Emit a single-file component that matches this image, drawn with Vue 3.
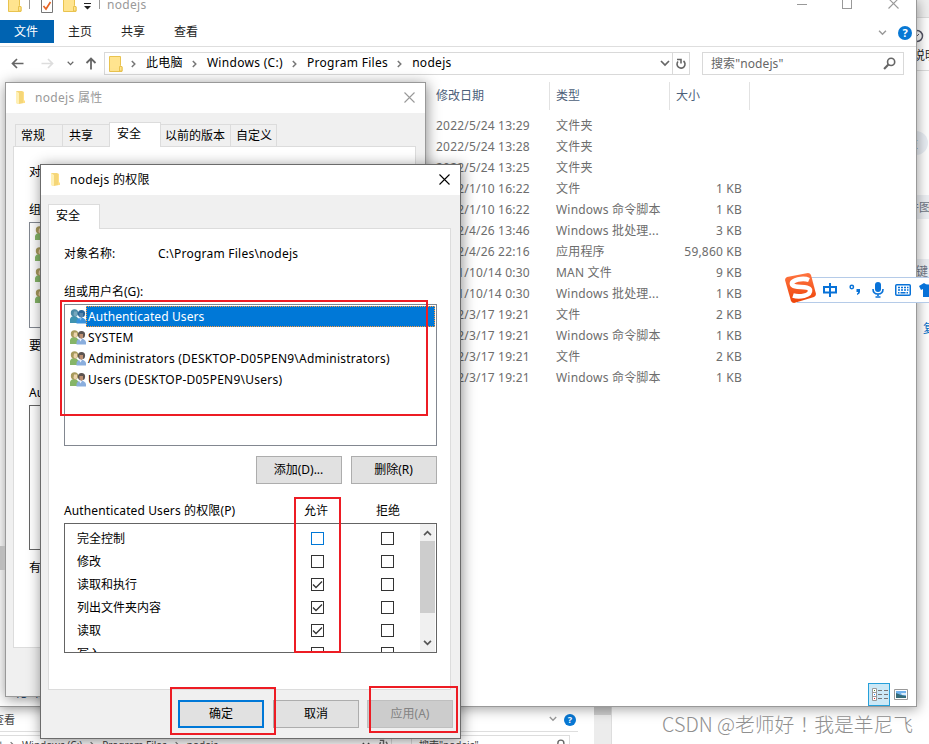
<template>
    <div class="desktop">
        <svg class="symbols" width="0" height="0">
            <symbol id="folder" viewBox="0 0 14 16">
                <path d="M.5 .5h11v9l1.500 1.500v4.500H.5z" fill="#ffe48f" stroke="#e9c34f" />
                <path d="M10.500 15v-4.500h2.500V15z" fill="#ffe48f" stroke="#e9c34f" />
            </symbol>
            <symbol id="folder-small" viewBox="0 0 12 13">
                <path d="M1 0h6l2 1v11l-5 1-3-1z" fill="#f5d678" />
                <path d="M1 0l3 2v11l-3-1z" fill="#fff0b5" />
                <path d="M8 1h1v8l1 1v2H8z" fill="#ffdf85" />
            </symbol>
            <symbol id="users" viewBox="0 0 16 15">
                <path d="M0 14V10Q1 7 4 7t4.500 3v4z" fill="#86b568" />
                <circle cx="4.500" cy="4" r="3.700" fill="#a79a5c" />
                <path d="M4 2.500h3v4L5 7.500 3.500 6z" fill="#ecd3ad" />
                <path d="M6.500 14.500V12q1-3.500 4.500-3.500t5 3.500v2.500z" fill="#8aaedd" />
                <path d="M9 9l1.500 2.500L12 9z" fill="#eef4ff" />
                <circle cx="11.500" cy="4.700" r="3.600" fill="#5c5450" />
                <path d="M9.500 4h3.500v3.500L11.500 9 9.500 7z" fill="#bd9072" />
            </symbol>
            <symbol id="users-selected" viewBox="0 0 16 15">
                <path d="M0 14V10Q1 7 4 7t4.500 3v4z" fill="#3f93b0" />
                <circle cx="4.500" cy="4" r="3.700" fill="#4b8aa6" />
                <path d="M4 2.500h3v4L5 7.500 3.500 6z" fill="#78a7bd" />
                <path d="M6.500 14.500V12q1-3.500 4.500-3.500t5 3.500v2.500z" fill="#3992dc" />
                <path d="M9 9l1.500 2.500L12 9z" fill="#83bdf0" />
                <circle cx="11.500" cy="4.700" r="3.600" fill="#2a6496" />
                <path d="M9.500 4h3.500v3.500L11.500 9 9.500 7z" fill="#5a86ab" />
            </symbol>
            <symbol id="cross" viewBox="0 0 11 11">
                <path d="M.5 .5l10 10M10.500 .5l-10 10" fill="none" stroke="currentColor" stroke-width="1.100" />
            </symbol>
            <symbol id="right" viewBox="0 0 5 8">
                <path d="M.8 1l3 3-3 3" fill="none" stroke="#777" stroke-width="1.500" />
            </symbol>
            <symbol id="down" viewBox="0 0 10 7">
                <path d="M1 1l4 4 4-4" fill="none" stroke="currentColor" stroke-width="1.700" />
            </symbol>
            <symbol id="search" viewBox="0 0 12 12">
                <circle cx="7.500" cy="4.500" r="3.300" fill="none" stroke="#666" stroke-width="1.500" />
                <path d="M5 7L1 11" stroke="#666" stroke-width="2" />
            </symbol>
            <symbol id="refresh" viewBox="0 0 12 12">
                <path d="M8.500 3a4 4 0 1 1-5.500 .5" fill="none" stroke="#666" stroke-width="1.600" />
                <path d="M2 1.500h4v4" fill="none" stroke="#666" stroke-width="1.600" />
            </symbol>
        </svg>

        <aside class="page-edge">
            <div class="edge-top"></div>
            <svg class="edge-clock" width="14" height="14" viewBox="0 0 14 14">
                <circle cx="7" cy="7" r="5.500" fill="none" stroke="#555666" stroke-width="1.500" />
                <path d="M7 7l2-2" stroke="#555666" />
            </svg>
            <div class="edge-label">说明</div>
            <div class="edge-pill">性</div>
            <div class="edge-tag">件图</div>
            <div class="edge-tag second">键</div>
            <div class="edge-link">复</div>
        </aside>

        <section class="back-window">
            <div class="back-main">
                <div class="back-ribbon">
                    <span>查看</span>
                    <svg class="back-down" width="8" height="6"><use href="#down" /></svg>
                    <span class="help small">?</span>
                </div>
                <div class="back-address">
                    <div class="back-path">
                        <span>脑</span><svg width="4" height="7"><use href="#right" /></svg>
                        <span>Windows (C:)</span><svg width="4" height="7"><use href="#right" /></svg>
                        <span>Program Files</span><svg width="4" height="7"><use href="#right" /></svg>
                        <span>nodejs</span>
                        <svg class="push" width="8" height="6"><use href="#down" /></svg>
                        <svg width="11" height="11"><use href="#refresh" /></svg>
                    </div>
                    <div class="back-search">搜索"nodejs"<svg width="11" height="11"><use href="#search" /></svg></div>
                </div>
            </div>
            <div class="back-scroll"><div></div></div>
        </section>

        <section class="explorer">
            <header class="caption">
                <svg class="cap-folder" width="14" height="16"><use href="#folder" /></svg>
                <i class="divider"></i>
                <svg class="cap-check" width="12" height="16" viewBox="0 0 12 16">
                    <path d="M.5 .5h11v15H.5z" fill="#fff" stroke="#777" />
                    <path d="M2.500 9l2.500 3 4.500-7" fill="none" stroke="#e66425" stroke-width="1.700" />
                </svg>
                <svg class="cap-folder two" width="14" height="16"><use href="#folder" /></svg>
                <svg class="cap-arrow" width="7" height="7" viewBox="0 0 7 7">
                    <path d="M0 0h7v1H0zM0 3h7L3.500 6.500z" fill="#222" />
                </svg>
                <i class="divider"></i>
                <span class="cap-title">nodejs</span>
                <i class="minimise"></i>
                <i class="maximise"></i>
                <svg class="cap-close" width="11" height="11"><use href="#cross" /></svg>
            </header>
            <nav class="ribbon">
                <b>文件</b><span>主页</span><span>共享</span><span>查看</span>
                <svg width="9" height="6"><use href="#down" /></svg>
                <span class="help">?</span>
            </nav>
            <div class="address-row">
                <svg class="nav-back" width="13" height="11" viewBox="0 0 13 11">
                    <path d="M12.500 5.500h-11M6 1L1.500 5.500 6 10" fill="none" stroke="#666" stroke-width="1.700" />
                </svg>
                <svg class="nav-next" width="13" height="11" viewBox="0 0 13 11">
                    <path d="M.5 5.500h11M7 1l4.500 4.500L7 10" fill="none" stroke="#ddd" stroke-width="1.700" />
                </svg>
                <svg class="nav-recent" width="7" height="5"><use href="#down" /></svg>
                <svg class="nav-up" width="12" height="13" viewBox="0 0 12 13">
                    <path d="M6 12.500v-11M1.500 6L6 1.500 10.500 6" fill="none" stroke="#666" stroke-width="1.800" />
                </svg>
                <div class="address">
                    <svg class="path-folder" width="14" height="16"><use href="#folder" /></svg>
                    <template v-for="part in path" :key="part">
                        <svg class="path-sep" width="5" height="8"><use href="#right" /></svg>
                        <span>{{ part }}</span>
                    </template>
                    <svg class="address-down" width="10" height="7"><use href="#down" /></svg>
                    <div class="refresh"><svg width="12" height="12"><use href="#refresh" /></svg></div>
                </div>
                <div class="search">搜索"nodejs"<svg width="13" height="13"><use href="#search" /></svg></div>
            </div>
            <div class="file-list">
                <div class="file-head"><span>修改日期</span><span>类型</span><span>大小</span></div>
                <div class="file" v-for="(file, index) in files" :key="index">
                    <span>{{ file[0] }}</span><span>{{ file[1] }}</span><span>{{ file[2] }}</span>
                </div>
            </div>
            <footer class="status">
                <span>15 个</span>
                <div class="view details">
                    <svg width="16" height="13" viewBox="0 0 16 13">
                        <path d="M.5 .5h4v12h-4zM.5 4.500h4M.5 8.500h4" fill="#fff" stroke="#999" />
                        <path d="M6 2.500h4m2 0h4M6 6.500h4m2 0h4M6 10.500h4m2 0h4" stroke="#777" />
                        <path d="M2 2h1v1H2z" fill="#5a8a32" /><path d="M2 6h1v1H2z" fill="#1e90ff" /><path d="M2 10h1v1H2z" fill="#e02020" />
                    </svg>
                </div>
                <svg class="view-picture" width="14" height="11" viewBox="0 0 14 11">
                    <path d="M.5 .5h13v10H.5z" fill="#fff" stroke="#999" />
                    <path d="M2 2h10v7H2z" fill="#72b3ee" /><path d="M2 4l5 2 5 1v2H2z" fill="#356b78" />
                    <path d="M7 4h5v2H8z" fill="#d8ecfa" />
                </svg>
            </footer>
        </section>

        <section class="dialog properties">
            <header>
                <svg width="12" height="13"><use href="#folder-small" /></svg>
                <span>nodejs 属性</span>
                <svg class="close" width="11" height="11"><use href="#cross" /></svg>
            </header>
            <div class="tabs">
                <span>常规</span><span>共享</span><span class="active">安全</span><span class="wide">以前的版本</span><span>自定义</span>
            </div>
            <div class="pane">
                <p class="object">对</p>
                <p class="group">组</p>
                <div class="mini-list">
                    <svg v-for="n in 4" :key="n" width="16" height="15"><use href="#users" /></svg>
                </div>
                <p class="edit">要</p>
                <p class="auth">Au</p>
                <div class="mini-perms"></div>
                <p class="special">有</p>
            </div>
        </section>

        <section class="dialog permissions">
            <header>
                <svg width="12" height="13"><use href="#folder-small" /></svg>
                <span>nodejs 的权限</span>
                <svg class="close" width="11" height="11"><use href="#cross" /></svg>
            </header>
            <div class="tabs"><span class="active">安全</span></div>
            <div class="pane">
                <div class="object-row"><span>对象名称:</span><span>C:\Program Files\nodejs</span></div>
                <p class="group-label">组或用户名(G):</p>
                <div class="user-list">
                    <div class="user" v-for="(user, index) in users" :key="user" :class="{ selected: index === 0 }">
                        <svg width="16" height="15"><use :href="index === 0 ? '#users-selected' : '#users'" /></svg>
                        <span>{{ user }}</span>
                    </div>
                </div>
                <div class="list-buttons"><button>添加(D)...</button><button>删除(R)</button></div>
                <div class="perm-head"><span>Authenticated Users 的权限(P)</span><span>允许</span><span>拒绝</span></div>
                <div class="perm-box">
                    <div class="perm-list">
                        <div class="perm" v-for="(perm, index) in permissions" :key="perm.name">
                            <span>{{ perm.name }}</span>
                            <i class="check" :class="{ focus: index === 0 }">
                                <svg v-if="perm.allow" width="11" height="11" viewBox="0 0 11 11">
                                    <path d="M1 5.500l3 3 6-6" fill="none" stroke="#333" stroke-width="1.300" />
                                </svg>
                            </i>
                            <i class="check"></i>
                        </div>
                    </div>
                    <div class="scrollbar">
                        <svg width="9" height="6" viewBox="0 0 10 7"><path d="M1 6l4-4 4 4" fill="none" stroke="#555" stroke-width="2" /></svg>
                        <div class="thumb"></div>
                        <svg width="9" height="6" viewBox="0 0 10 7"><path d="M1 1l4 4 4-4" fill="none" stroke="#555" stroke-width="2" /></svg>
                    </div>
                </div>
            </div>
            <footer><button class="primary">确定</button><button>取消</button><button class="disabled">应用(A)</button></footer>
        </section>

        <div class="side-thumb"></div>

        <div class="mark mark-users"></div>
        <div class="mark mark-allow"></div>
        <div class="mark mark-ok"></div>
        <div class="mark mark-apply"></div>

        <div class="ime">
            <svg class="ime-mode" width="14" height="14" viewBox="0 0 14 14">
                <path d="M1 4h12v5.500H1zM7 0v14" fill="none" stroke="#0872d8" stroke-width="2" />
            </svg>
            <svg class="ime-punct" width="12" height="12" viewBox="0 0 12 12">
                <circle cx="2.800" cy="3" r="1.700" fill="none" stroke="#0872d8" stroke-width="1.500" />
                <path d="M7.500 5h3.500v3q0 2-3 3V9.500q1-.5 1.200-1.500H7.500z" fill="#0872d8" />
            </svg>
            <svg class="ime-mic" width="12" height="16" viewBox="0 0 12 16">
                <rect x="3" y="0" width="6" height="10" rx="3" fill="#0872d8" />
                <path d="M1 7q0 5 5 5t5-5M6 12v2M3.500 15h5" fill="none" stroke="#0872d8" stroke-width="1.600" />
            </svg>
            <svg class="ime-keys" width="16" height="12" viewBox="0 0 16 12">
                <rect x=".75" y=".75" width="14.500" height="10.500" rx="1" fill="#fff" stroke="#0872d8" stroke-width="1.500" />
                <path d="M3 3.500h2m1 0h2m1 0h2m1 0h1.500M3 6h2m1 0h2m1 0h2m1 0h1.500M3 8.700h1.500m1 0h5m1 0H13" stroke="#0872d8" stroke-width="1.600" />
            </svg>
            <svg class="ime-skin" width="18" height="14" viewBox="0 0 18 14">
                <path d="M0 3l5-3q4 3 8 0l5 3-2 4-2-1v8H4V6L2 7z" fill="#0872d8" />
            </svg>
        </div>
        <svg class="ime-logo" width="34" height="32" viewBox="0 0 34 32">
            <defs>
                <linearGradient id="orange" x1="0" y1="0" x2="0" y2="1">
                    <stop offset="0" stop-color="#ff7440" /><stop offset="1" stop-color="#ed4409" />
                </linearGradient>
            </defs>
            <path d="M3 5L24 1q2 0 3 2l5 19q0 2-2 3L10 31q-2 0-3-2L1 8q0-2 2-3z" fill="url(#orange)" />
            <path d="M25 8C19 5.500 7 8 8 12c1 5 17 1 18 6 1 6-11 7.500-17 5.500" fill="none" stroke="#fff" stroke-width="4.600" />
        </svg>

        <div class="watermark">CSDN @老师好<span>！</span>我是羊尼飞</div>
    </div>
</template>

<script setup>
const path = ['此电脑', 'Windows (C:)', 'Program Files', 'nodejs'];

const files = [
    ['2022/5/24 13:29', '文件夹', ''],
    ['2022/5/24 13:28', '文件夹', ''],
    ['2022/5/24 13:25', '文件夹', ''],
    ['2022/1/10 16:22', '文件', '1 KB'],
    ['2022/1/10 16:22', 'Windows 命令脚本', '1 KB'],
    ['2022/4/26 13:46', 'Windows 批处理...', '3 KB'],
    ['2022/4/26 22:16', '应用程序', '59,860 KB'],
    ['2021/10/14 0:30', 'MAN 文件', '9 KB'],
    ['2021/10/14 0:30', 'Windows 批处理...', '1 KB'],
    ['2022/3/17 19:21', '文件', '2 KB'],
    ['2022/3/17 19:21', 'Windows 命令脚本', '1 KB'],
    ['2022/3/17 19:21', '文件', '2 KB'],
    ['2022/3/17 19:21', 'Windows 命令脚本', '1 KB']
];

const users = [
    'Authenticated Users',
    'SYSTEM',
    'Administrators (DESKTOP-D05PEN9\\Administrators)',
    'Users (DESKTOP-D05PEN9\\Users)'
];

const permissions = [
    { name: '完全控制', allow: false },
    { name: '修改', allow: false },
    { name: '读取和执行', allow: true },
    { name: '列出文件夹内容', allow: true },
    { name: '读取', allow: true },
    { name: '写入', allow: false }
];
</script>

<style>
body {
    margin: 0;
    overflow: hidden;
}
</style>

<style scoped>
.desktop {
    position: relative;
    width: 929px;
    height: 744px;
    overflow: hidden;
    background: #fff;
    color: #000;
    font: 12px/16px "Noto Sans", "Noto Sans CJK SC", sans-serif;
    white-space: nowrap;
}
.desktop * {
    box-sizing: border-box;
}
.symbols {
    position: absolute;
}
svg {
    flex: none;
    display: block;
}
p {
    margin: 0;
}
.help {
    width: 14px;
    height: 14px;
    border-radius: 50%;
    background: #0878d4;
    color: #fff;
    font-size: 11px;
    line-height: 14px;
    font-weight: bold;
    text-align: center;
}
.help.small {
    width: 12px;
    height: 12px;
    line-height: 12px;
    font-size: 9px;
}

/* page behind the windows */
.page-edge {
    position: absolute;
    left: 911px;
    top: 0;
    width: 18px;
    height: 744px;
    overflow: hidden;
    color: #707888;
}
.edge-top {
    height: 18px;
    background: #f0f0f0;
    border-bottom: 1px solid #ddd;
}
.edge-clock {
    margin: 11px 0 0 -1px;
}
.edge-label {
    height: 28px;
    padding: 5px 0 0 2px;
    color: #222;
    border-bottom: 1px solid #ddd;
}
.edge-pill {
    width: 17px;
    height: 24px;
    margin-top: 60px;
    border-radius: 0 12px 12px 0;
    background: #e9eef4;
    line-height: 25px;
    text-indent: -5px;
}
.edge-tag {
    height: 24px;
    margin-top: 40px;
    background: #edf0f4;
    line-height: 25px;
    text-indent: -4px;
}
.edge-tag.second {
    text-indent: 5px;
}
.edge-link {
    margin: 38px 0 0 12px;
    color: #0872c9;
}

/* second explorer at the bottom */
.back-window {
    position: absolute;
    left: 0;
    top: 706px;
    width: 612px;
    height: 38px;
    display: flex;
    overflow: hidden;
    color: #444;
}
.back-main {
    width: 594px;
}
.back-ribbon {
    display: flex;
    align-items: center;
    width: 578px;
    height: 26px;
    border-bottom: 1px solid #dedede;
    font-size: 11px;
}
.back-ribbon > span:first-child {
    margin: 2px 0 0 -7px;
}
.back-down {
    margin-left: auto;
    color: #999;
}
.back-ribbon .help {
    margin: 2px 2px 0 7px;
}
.back-address {
    display: flex;
    padding-top: 3px;
    font-size: 10px;
}
.back-path {
    display: flex;
    flex: none;
    align-items: center;
    gap: 8px;
    width: 405px;
    height: 18px;
    margin-left: -13px;
    padding: 0 2px 0 4px;
    border: 1px solid #ddd;
    border-bottom: 0;
}
.back-path .push {
    margin-left: auto;
}
.back-search {
    display: flex;
    align-items: center;
    justify-content: space-between;
    width: 159px;
    height: 18px;
    margin-left: 19px;
    padding: 0 4px 0 7px;
    border: 1px solid #ddd;
    border-bottom: 0;
}
.back-scroll {
    width: 18px;
    background: #ececec;
    border-right: 1px solid #ddd;
}
.back-scroll div {
    height: 9px;
    background: #cdcdcd;
}

/* main explorer */
.explorer {
    position: absolute;
    left: -2px;
    top: -1px;
    width: 919px;
    height: 708px;
    padding: 1px 0 0 2px;
    display: flex;
    flex-direction: column;
    background: #fff;
    border: solid #999;
    border-width: 0 1px 1px 0;
    box-shadow: 1px 2px 12px rgba(0, 0, 0, .38);
}
.caption {
    display: flex;
    align-items: flex-start;
    height: 20px;
    color: #999;
}
.cap-folder {
    margin: -4px 0 0 8px;
}
.cap-folder.two {
    margin-left: 10px;
}
.cap-check {
    margin: -3px 0 0 11px;
}
.divider {
    width: 1px;
    height: 9px;
    margin-left: 7px;
    background: #999;
}
.cap-arrow {
    margin: 3px 1px 0 7px;
}
.cap-title {
    margin: -4px 0 0 7px;
    font-size: 12px;
    line-height: 17px;
    letter-spacing: .3px;
}
.minimise {
    width: 10px;
    height: 1px;
    margin: 4px 0 0 auto;
    background: #999;
}
.maximise {
    width: 10px;
    height: 10px;
    margin: -1px 0 0 35px;
    border: 1px solid #999;
}
.cap-close {
    margin: -2px 17px 0 36px;
}
.ribbon {
    display: flex;
    align-items: center;
    height: 27px;
    padding-bottom: 3px;
    border-bottom: 1px solid #dedede;
    color: #222;
}
.ribbon b {
    width: 54px;
    height: 23px;
    margin-right: -15px;
    background: #0063b1;
    color: #fff;
    font-weight: normal;
    line-height: 24px;
    text-align: center;
    text-indent: -2px;
}
.ribbon > span:not(.help) {
    margin-left: 29px;
    line-height: 24px;
}
.ribbon svg {
    margin: 2px 0 0 auto;
    color: #999;
}
.ribbon .help {
    margin: 3px 4px 0 11px;
}
.address-row {
    display: flex;
    align-items: center;
    height: 33px;
    padding-left: 11px;
}
.nav-next {
    margin-left: 17px;
}
.nav-recent {
    margin-left: 13px;
    color: #666;
}
.nav-up {
    margin-left: 11px;
}
.address {
    display: flex;
    align-items: center;
    width: 586px;
    height: 23px;
    margin-left: 7px;
    border: 1px solid #d9d9d9;
}
.path-folder {
    margin: 0 8px 0 4px;
}
.path-sep:not(:nth-child(2)) {
    margin-left: 9px;
}
.address span {
    margin-left: 10px;
    line-height: 20px;
    height: 21px;
    letter-spacing: .3px;
}
.address-down {
    margin-left: auto;
    margin-right: 2px;
    color: #666;
}
.refresh {
    display: flex;
    align-items: center;
    justify-content: center;
    width: 17px;
    height: 21px;
    border-left: 1px solid #d9d9d9;
}
.search {
    display: flex;
    align-items: center;
    justify-content: space-between;
    width: 202px;
    height: 23px;
    margin-left: 12px;
    padding: 0 7px 0 8px;
    border: 1px solid #d9d9d9;
    color: #666;
    letter-spacing: .1px;
}
.file-list {
    width: 322px;
    margin: 2px 0 0 429px;
    color: #6d6d6d;
}
.file-head {
    display: grid;
    grid-template-columns: 121px 120px 80px;
    height: 28px;
    margin-bottom: 5px;
    color: #4c607a;
    line-height: 28px;
}
.file-head span {
    padding-left: 6px;
    border-right: 1px solid #e2e2e2;
}
.file-head span:first-child {
    padding-left: 7px;
}
.file {
    display: grid;
    grid-template-columns: 120px 115px 71px;
    height: 21px;
    padding-left: 7px;
    line-height: 21px;
    letter-spacing: .2px;
}
.file span:last-child {
    text-align: right;
}
.status {
    display: flex;
    align-items: center;
    height: 24px;
    margin-top: auto;
    padding: 0 8px 0 14px;
    color: #234e80;
}
.view {
    display: flex;
    align-items: center;
    justify-content: center;
    width: 22px;
    height: 23px;
    margin: 0 4px 0 auto;
    border: 1px solid #26a0da;
    background: #cce8f6;
}
.details svg {
    margin-left: 2px;
}

/* dialogs */
.dialog {
    position: absolute;
    display: flex;
    flex-direction: column;
    background: #f0f0f0;
    border: 1px solid #999;
    box-shadow: 1px 2px 13px rgba(0, 0, 0, .45);
}
.dialog header {
    display: flex;
    flex: none;
    align-items: center;
    height: 30px;
    padding: 0 10px 1px 9px;
    background: #fff;
}
.dialog header span {
    margin-left: 8px;
    line-height: 17px;
    letter-spacing: .3px;
}
.close {
    margin-left: auto;
}
.tabs {
    display: flex;
    align-items: flex-end;
    flex: none;
}
.tabs span {
    height: 22px;
    padding: 0 5px;
    border: 1px solid #dcdcdc;
    border-width: 1px 1px 0 0;
    line-height: 22px;
}
.tabs .active {
    position: relative;
    background: #fff;
    border-left-width: 1px;
}
.pane {
    background: #fff;
    border: 1px solid #dcdcdc;
}
.properties {
    left: 5px;
    top: 82px;
    width: 421px;
    height: 615px;
}
.properties header {
    color: #999;
}
.properties .tabs {
    height: 33px;
    padding-left: 9px;
}
.properties .tabs span {
    width: 47px;
}
.properties .tabs span:first-child {
    border-left-width: 1px;
    width: 48px;
}
.properties .tabs span:nth-child(2) {
    padding-left: 6px;
}
.properties .tabs .active {
    width: 52px;
    height: 25px;
    margin: 0 0 -1px -1px;
    padding-left: 7px;
}
.properties .tabs .wide {
    width: 70px;
    padding-left: 4px;
}
.properties .tabs span:last-child {
    width: 46px;
}
.properties .pane {
    width: 403px;
    height: 502px;
    margin-left: 7px;
    padding-left: 15px;
}
.object {
    margin-top: 17px;
}
.group {
    margin-top: 22px;
}
.mini-list {
    display: flex;
    flex-direction: column;
    gap: 6px;
    height: 106px;
    margin-top: 4px;
    padding: 3px 5px;
    border: 1px solid #828790;
}
.edit {
    margin-top: 10px;
}
.auth {
    margin-top: 31px;
}
.mini-perms {
    height: 145px;
    margin-top: 4px;
    border: 1px solid #646464;
}
.special {
    margin-top: 10px;
}
.permissions {
    left: 40px;
    top: 164px;
    width: 421px;
    height: 575px;
    border-color: #6b6b6b;
}
.permissions .tabs {
    height: 33px;
    padding-left: 7px;
}
.permissions .tabs span {
    width: 52px;
    height: 25px;
    margin-bottom: -1px;
    padding-left: 7px;
}
.permissions .pane {
    width: 403px;
    height: 462px;
    margin-left: 7px;
    padding: 17px 0 0 15px;
}
.object-row {
    display: flex;
}
.object-row span:first-child {
    width: 94px;
}
.object-row span:last-child {
    letter-spacing: .24px;
}
.group-label {
    margin-top: 22px;
}
.user-list {
    width: 373px;
    height: 142px;
    margin-top: 4px;
    padding: 1px 1px 0 5px;
    border: 1px solid #828790;
}
.user {
    display: flex;
    align-items: center;
    height: 21px;
}
.user span {
    flex: 1;
    height: 21px;
    padding-left: 2px;
    line-height: 22px;
    letter-spacing: .23px;
}
.user.selected span {
    padding-left: 1px;
    border: 1px dotted #ff9a3c;
    background: #0078d7;
    color: #fff;
    line-height: 19px;
    letter-spacing: .1px;
}
button {
    width: 86px;
    height: 28px;
    padding: 0;
    border: 1px solid #adadad;
    background: #e1e1e1;
    color: #000;
    font: inherit;
    line-height: 26px;
}
.list-buttons {
    display: flex;
    gap: 9px;
    margin: 10px 0 0 192px;
}
.list-buttons button {
    padding-right: 1px;
}
.perm-head {
    display: grid;
    grid-template-columns: 240px 72px 60px;
    margin-top: 19px;
}
.perm-head span:first-child {
    letter-spacing: .12px;
}
.perm-box {
    display: flex;
    width: 373px;
    height: 130px;
    margin-top: 4px;
    border: 1px solid #646464;
}
.perm-list {
    width: 355px;
    padding-top: 3px;
    overflow: hidden;
}
.perm {
    display: grid;
    grid-template-columns: 234px 70px 50px;
    align-items: center;
    height: 23px;
    padding-left: 12px;
}
.check {
    width: 13px;
    height: 13px;
    border: 1px solid #333;
}
.check.focus {
    border-color: #0078d7;
}
.scrollbar {
    display: flex;
    flex-direction: column;
    align-items: center;
    width: 15px;
    padding: 6px 0;
    background: #f0f0f0;
}
.thumb {
    width: 15px;
    height: 72px;
    margin: 5px 0 auto;
    background: #cdcdcd;
}
.permissions footer {
    display: flex;
    margin: 10px 0 0 137px;
}
.permissions footer button + button {
    margin-left: 9px;
}
.permissions footer .primary {
    border: 2px solid #0078d7;
    line-height: 24px;
}
.permissions footer .disabled {
    margin-left: 8px !important;
    border-color: #bfbfbf;
    background: #ccc;
    color: #838383;
}
.side-thumb {
    position: absolute;
    left: 0;
    top: 546px;
    width: 5px;
    height: 24px;
    background: #bcbcbc;
}

/* red frames drawn over the dialog */
.mark {
    position: absolute;
    border: 2px solid #ed1c24;
}
.mark-users {
    left: 60px;
    top: 300px;
    width: 368px;
    height: 116px;
}
.mark-allow {
    left: 294px;
    top: 497px;
    width: 47px;
    height: 156px;
}
.mark-ok {
    left: 170px;
    top: 687px;
    width: 106px;
    height: 48px;
}
.mark-apply {
    left: 369px;
    top: 686px;
    width: 89px;
    height: 47px;
}

/* input method bar */
.ime {
    position: absolute;
    left: 797px;
    top: 277px;
    width: 140px;
    height: 26px;
    display: flex;
    align-items: center;
    padding-left: 25px;
    border: 1px solid #b5cbe8;
    background: #fff;
}
.ime-punct {
    margin-left: 12px;
}
.ime-mic {
    margin-left: 11px;
}
.ime-keys {
    margin-left: 11px;
}
.ime-skin {
    margin-left: 8px;
}
.ime-logo {
    position: absolute;
    left: 784px;
    top: 272px;
}
.watermark {
    position: absolute;
    left: 662px;
    top: 710px;
    color: #8f8f8f;
    font: 300 19.8px/28px "Noto Sans CJK SC", sans-serif;
}
.watermark span {
    font-family: "Noto Sans CJK TC", sans-serif;
}
</style>
